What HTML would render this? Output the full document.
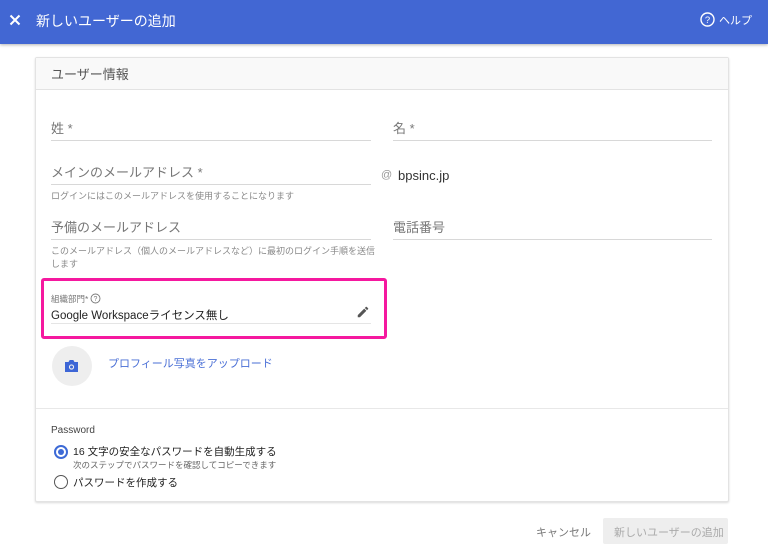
<!DOCTYPE html>
<html><head><meta charset="utf-8"><style>
*{margin:0;padding:0;box-sizing:border-box}
body{width:768px;height:542px;overflow:hidden;background:#fff;font-family:"Liberation Sans","Noto Sans CJK JP",sans-serif;position:relative}
.a{position:absolute;white-space:nowrap}
.hdr{position:absolute;left:0;top:0;width:768px;height:44px;background:#4267d3;box-shadow:0 1px 3px rgba(0,0,0,.3)}
.card{position:absolute;left:35px;top:57px;width:694px;height:445px;border:1px solid #e3e3e3;border-radius:2px;box-shadow:0 1px 2px rgba(0,0,0,.15);background:#fff}
.line{position:absolute;height:1px;background:#d8d8d8}
.lbl{color:#777;font-size:13px}
.help{color:#888;font-size:9px}
</style></head><body>
<div class="hdr"></div>
<svg class="a" style="left:8px;top:13px" width="14" height="14" viewBox="0 0 14 14"><path d="M2.5 2.5L11.5 11.5M11.5 2.5L2.5 11.5" stroke="#fff" stroke-width="2"/></svg>
<div class="a" style="left:36px;top:11px;color:#fff;font-size:14px">新しいユーザーの追加</div>
<svg class="a" style="left:699px;top:11px" width="17" height="17" viewBox="0 0 17 17"><circle cx="8.5" cy="8.5" r="6.5" fill="none" stroke="#fff" stroke-width="1.4"/><text x="8.5" y="12" fill="#fff" font-size="9.5" text-anchor="middle" font-family="Liberation Sans">?</text></svg>
<div class="a" style="left:719px;top:12px;color:#fff;font-size:11px">ヘルプ</div>

<div class="card">
 <div style="position:absolute;left:0;top:0;width:692px;height:32px;background:#f9f9f9;border-bottom:1px solid #e3e3e3"></div>
 <div style="position:absolute;left:0;top:350px;width:692px;height:1px;background:#e8e8e8"></div>
</div>
<div class="a" style="left:51px;top:64px;color:#555;font-size:13px">ユーザー情報</div>

<div class="a lbl" style="left:51px;top:118px">姓 *</div>
<div class="line" style="left:51px;top:140px;width:320px"></div>
<div class="a lbl" style="left:393px;top:118px">名 *</div>
<div class="line" style="left:393px;top:140px;width:319px"></div>

<div class="a lbl" style="left:51px;top:162px">メインのメールアドレス *</div>
<div class="line" style="left:51px;top:184px;width:320px"></div>
<div class="a help" style="left:51px;top:189px">ログインにはこのメールアドレスを使用することになります</div>
<div class="a" style="left:381px;top:169px;color:#999;font-size:11px">@</div>
<div class="a" style="left:398px;top:168px;color:#333;font-size:13px">bpsinc.jp</div>

<div class="a lbl" style="left:51px;top:217px">予備のメールアドレス</div>
<div class="line" style="left:51px;top:239px;width:320px"></div>
<div class="a lbl" style="left:393px;top:217px">電話番号</div>
<div class="line" style="left:393px;top:239px;width:319px"></div>
<div class="a help" style="left:51px;top:244px">このメールアドレス（個人のメールアドレスなど）に最初のログイン手順を送信</div>
<div class="a help" style="left:51px;top:257px">します</div>

<div class="a" style="left:41px;top:278px;width:346px;height:61px;border:3px solid #f5189f;border-radius:3px"></div>
<div class="a" style="left:51px;top:293px;color:#777;font-size:8.5px">組織部門* </div>
<svg class="a" style="left:90px;top:293px" width="11" height="11" viewBox="0 0 11 11"><circle cx="5.5" cy="5.5" r="4.5" fill="none" stroke="#777" stroke-width=".9"/><text x="5.5" y="8.2" fill="#777" font-size="7" text-anchor="middle" font-family="Liberation Sans">?</text></svg>
<div class="a" style="left:51px;top:307px;color:#222;font-size:11.5px">Google Workspaceライセンス無し</div>
<div class="line" style="left:51px;top:323px;width:320px;background:#e5e5e5"></div>
<svg class="a" style="left:356px;top:305px" width="14" height="14" viewBox="0 0 24 24"><path d="M3 17.25V21h3.75L17.81 9.94l-3.75-3.75L3 17.25zM20.71 7.04a1 1 0 000-1.41l-2.34-2.34a1 1 0 00-1.41 0l-1.83 1.83 3.75 3.75 1.83-1.83z" fill="#555"/></svg>

<div class="a" style="left:52px;top:346px;width:40px;height:40px;border-radius:50%;background:#eee"></div>
<svg class="a" style="left:64px;top:359px" width="15" height="14" viewBox="0 0 15 14"><path d="M1 3h3.5l1.2-2h3.6l1.2 2H14v10H1z" fill="#3d66d6"/><circle cx="7.5" cy="8" r="2.6" fill="#eee"/><circle cx="7.5" cy="8" r="1.5" fill="#3d66d6"/></svg>
<div class="a" style="left:108px;top:355px;color:#4a6fd6;font-size:11px">プロフィール写真をアップロード</div>

<div class="a" style="left:51px;top:425px;color:#444;font-size:10px">Password</div>
<div class="a" style="left:54px;top:445px;width:14px;height:14px;border:2px solid #3d6ad6;border-radius:50%"></div>
<div class="a" style="left:58px;top:449px;width:6px;height:6px;background:#3d6ad6;border-radius:50%"></div>
<div class="a" style="left:73px;top:444px;color:#222;font-size:10.5px">16 文字の安全なパスワードを自動生成する</div>
<div class="a" style="left:73px;top:459px;color:#666;font-size:8.5px">次のステップでパスワードを確認してコピーできます</div>
<div class="a" style="left:54px;top:475px;width:14px;height:14px;border:1.5px solid #555;border-radius:50%"></div>
<div class="a" style="left:73px;top:475px;color:#222;font-size:10.5px">パスワードを作成する</div>

<div class="a" style="left:536px;top:524px;color:#777;font-size:11px">キャンセル</div>
<div class="a" style="left:603px;top:518px;width:125px;height:26px;background:#eeeeee;border-radius:2px"></div>
<div class="a" style="left:614px;top:524px;color:#aaa;font-size:11px">新しいユーザーの追加</div>
</body></html>
